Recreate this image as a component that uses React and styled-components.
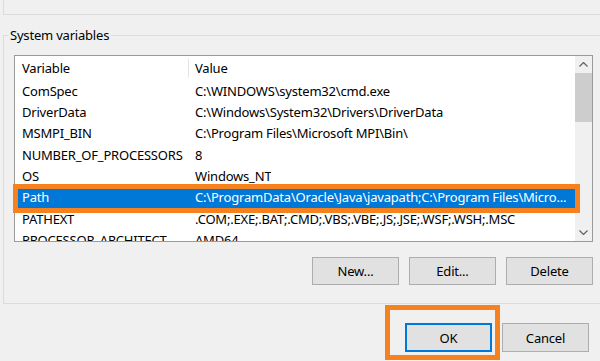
import React from "react";
import styled, { createGlobalStyle } from "styled-components";

const Global = createGlobalStyle`
  html, body { margin: 0; padding: 0; background: #f0f0f0; overflow: hidden; }
  body {
    font-family: "Noto Sans", "Segoe UI", sans-serif;
    font-size: 13px;
    letter-spacing: -0.2px;
    color: #000;
  }
`;

const Dialog = styled.div`
  width: 600px;
  height: 361px;
  overflow: hidden;
`;

const PrevGroupEdge = styled.div`
  height: 14px;
  margin-left: 3px;
  border-left: 1px solid #dcdcdc;
  border-bottom: 1px solid #dcdcdc;
`;

const GroupBox = styled.section`
  position: relative;
  margin: 20px -20px 0 3px;
  padding: 19px 0 18px 10px;
  border: 1px solid #dcdcdc;
  border-right: none;
`;

const Legend = styled.span`
  position: absolute;
  top: -9px;
  left: 4px;
  padding: 0 2px;
  line-height: 16px;
  background: #f0f0f0;
`;

const ListBox = styled.div`
  box-sizing: border-box;
  width: 579px;
  height: 187px;
  border: 1px solid #9a9a9a;
  background: #fff;
  display: flex;
`;

const Content = styled.div`
  flex: 1;
  position: relative;
  clip-path: polygon(-10px 0, calc(100% + 10px) 0, calc(100% + 10px) 100%, -10px 100%);
`;

const Header = styled.div`
  display: flex;
  align-items: center;
  height: 24px;
`;

const HeaderName = styled.div`
  box-sizing: border-box;
  width: 174px;
  height: 20px;
  padding-left: 7px;
  display: flex;
  align-items: center;
  border-right: 1px solid #e5e5e5;
`;

const Row = styled.div`
  position: relative;
  display: flex;
  align-items: center;
  height: 21.33px;
  white-space: nowrap;
  background: ${(p) => (p.$selected ? "#0078d7" : "transparent")};
  color: ${(p) => (p.$selected ? "#fff" : "#000")};
`;

const NameCell = styled.div`
  box-sizing: border-box;
  width: 174px;
  flex: none;
  padding: 0 4px 0 7px;
  overflow: hidden;
  text-overflow: ellipsis;
`;

const ValueCell = styled.div`
  padding-left: 6px;
  overflow: hidden;
`;

const Highlight = styled.div`
  position: absolute;
  left: ${(p) => p.$l}px;
  top: ${(p) => p.$t}px;
  right: ${(p) => p.$r}px;
  bottom: ${(p) => p.$b}px;
  border: 5px solid #f5821f;
  pointer-events: none;
`;

const ScrollBar = styled.div`
  width: 17px;
  flex: none;
  display: flex;
  flex-direction: column;
  background: #f0f0f0;
`;

const ScrollArrow = styled.div`
  height: 17px;
  display: flex;
  align-items: center;
  justify-content: center;
`;

const Thumb = styled.div`
  height: 49px;
  background: #cdcdcd;
`;

const Track = styled.div`
  flex: 1;
`;

const ButtonRow = styled.div`
  width: 579px;
  margin-top: 15px;
  display: flex;
  justify-content: flex-end;
  gap: 10px;
`;

const Button = styled.button`
  box-sizing: border-box;
  width: 87px;
  height: ${(p) => (p.$tall ? 29 : 28)}px;
  padding: 0;
  font: inherit;
  letter-spacing: inherit;
  color: #000;
  background: #e1e1e1;
  border: 1px solid ${(p) => (p.$default ? "#0078d7" : "#adadad")};
  box-shadow: ${(p) => (p.$default ? "inset 0 0 0 1px #0078d7" : "none")};
`;

const Footer = styled.div`
  display: flex;
  justify-content: flex-end;
  gap: 10px;
  padding: 19px 11px 0 0;
`;

const OkWrap = styled.div`
  position: relative;
  display: flex;
`;

const Chevron = ({ down }) => (
  <svg width="9" height="5" viewBox="0 0 9 5" style={{ transform: down ? "rotate(180deg)" : undefined }}>
    <polyline points="0.5,4.5 4.5,0.5 8.5,4.5" fill="none" stroke="#606060" strokeWidth="1.2" />
  </svg>
);

const rows = [
  ["ComSpec", "C:\\WINDOWS\\system32\\cmd.exe"],
  ["DriverData", "C:\\Windows\\System32\\Drivers\\DriverData"],
  ["MSMPI_BIN", "C:\\Program Files\\Microsoft MPI\\Bin\\"],
  ["NUMBER_OF_PROCESSORS", "8"],
  ["OS", "Windows_NT"],
  ["Path", "C:\\ProgramData\\Oracle\\Java\\javapath;C:\\Program Files\\Micro..."],
  ["PATHEXT", ".COM;.EXE;.BAT;.CMD;.VBS;.VBE;.JS;.JSE;.WSF;.WSH;.MSC"],
  ["PROCESSOR_ARCHITECTURE", "AMD64"],
];

export default function App() {
  return (
    <Dialog>
      <Global />
      <PrevGroupEdge />
      <GroupBox>
        <Legend>System variables</Legend>
        <ListBox>
          <Content>
            <Header>
              <HeaderName>Variable</HeaderName>
              <ValueCell>Value</ValueCell>
            </Header>
            {rows.map(([name, value]) => (
              <Row key={name} $selected={name === "Path"}>
                <NameCell>{name}</NameCell>
                <ValueCell>{value}</ValueCell>
                {name === "Path" && <Highlight $l={-2} $t={-3} $r={-5} $b={-5} />}
              </Row>
            ))}
          </Content>
          <ScrollBar>
            <ScrollArrow>
              <Chevron />
            </ScrollArrow>
            <Thumb />
            <Track />
            <ScrollArrow>
              <Chevron down />
            </ScrollArrow>
          </ScrollBar>
        </ListBox>
        <ButtonRow>
          <Button>New...</Button>
          <Button>Edit...</Button>
          <Button>Delete</Button>
        </ButtonRow>
      </GroupBox>
      <Footer>
        <OkWrap>
          <Button $tall $default>OK</Button>
          <Highlight $l={-20} $t={-18} $r={-8} $b={-8} />
        </OkWrap>
        <Button $tall>Cancel</Button>
      </Footer>
    </Dialog>
  );
}
